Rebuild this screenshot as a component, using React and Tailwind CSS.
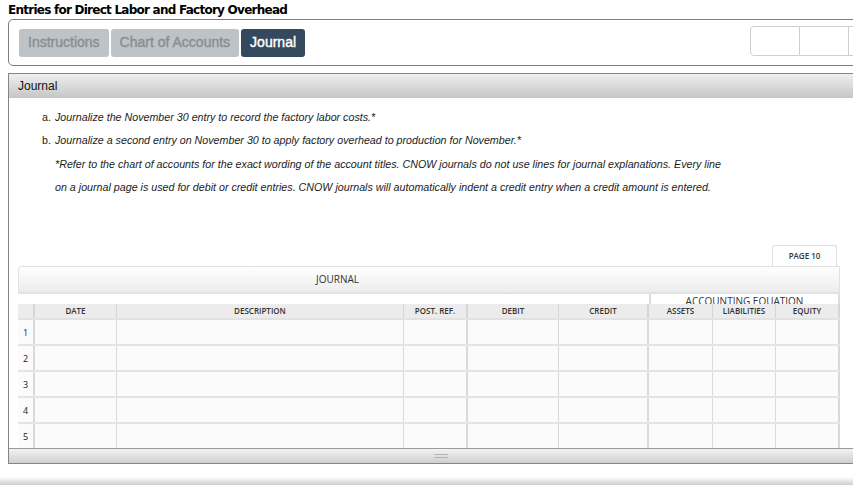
import React from 'react';

const cols = [
  { key: 'num', label: '', w: 'w-[17px] border-r-2' },
  { key: 'date', label: 'DATE', w: 'w-[82px] border-r' },
  { key: 'desc', label: 'DESCRIPTION', w: 'w-[287px] border-r' },
  { key: 'ref', label: 'POST. REF.', w: 'w-[64px] border-r-2' },
  { key: 'debit', label: 'DEBIT', w: 'w-[91px] border-r' },
  { key: 'credit', label: 'CREDIT', w: 'w-[90px] border-r-2' },
  { key: 'assets', label: 'ASSETS', w: 'w-[64px] border-r' },
  { key: 'liab', label: 'LIABILITIES', w: 'w-[63px] border-r' },
  { key: 'equity', label: 'EQUITY', w: 'w-[64px] border-r-2' },
];

const Tab = ({ label, active }) => (
  <div
    className={
      'h-[28px] px-[9px] flex items-center rounded-[3px] text-[14px] [-webkit-text-stroke:0.4px_currentColor] ' +
      (active ? 'bg-[#34495e] text-white' : 'bg-[#bdc3c7] text-[#8a8e91]')
    }
  >
    {label}
  </div>
);

const JournalTable = () => (
  <div className="w-[822px] ml-[9px] font-['Open_Sans',sans-serif]">
    {/* page tab */}
    <div className="flex justify-end pr-[3px]">
      <div className="w-[65px] h-[21px] border border-b-0 border-[#dedede] rounded-t-[3px] bg-white flex items-center justify-center text-[8px] font-semibold text-[#333]">
        PAGE 10
      </div>
    </div>

    {/* title bar */}
    <div className="h-[28px] border border-b-2 border-[#e2e2e2] rounded-tl-[4px] bg-gradient-to-b from-white to-[#ececec] flex items-center text-[10px] text-[#333]">
      <span className="w-[631px] text-center pl-[6px]">JOURNAL</span>
    </div>

    {/* accounting equation strip */}
    <div className="h-[10px] flex bg-white border-r-2 border-[#dcdcdc]">
      <div className="w-[631px]"></div>
      <div className="w-[189px] h-[10px] border-l-2 border-[#dcdcdc] text-center text-[10px] leading-[13px] text-[#333] pt-[1px] whitespace-nowrap">
        ACCOUNTING EQUATION
      </div>
    </div>

    {/* header row */}
    <div className="relative flex h-[16px] bg-[#ececec] border-b-2 border-[#e2e2e2]">
      {cols.map((c) => (
        <div
          key={c.key}
          className={c.w + ' border-[#d6d6d6] flex items-center justify-center text-[8px] font-semibold text-[#333]'}
        >
          {c.label}
        </div>
      ))}
    </div>

    {/* rows */}
    <div className="h-[128px] overflow-hidden">
      {[1, 2, 3, 4, 5].map((n) => (
        <div key={n} className="flex h-[26px] bg-[#fbfbfb] border-b-2 border-[#e4e4e4]">
          {cols.map((c) => (
            <div
              key={c.key}
              className={c.w + ' border-[#dadada] ' + (c.key === 'num' ? 'flex items-center pl-[5px] pt-[2px] text-[9px] text-[#222]' : '')}
            >
              {c.key === 'num' ? n : null}
            </div>
          ))}
        </div>
      ))}
    </div>
  </div>
);

export default function App() {
  return (
    <div className="w-[853px] h-[492px] overflow-hidden bg-white font-['Liberation_Sans',Arial,sans-serif] text-[#222]">
      {/* page title */}
      <div className="h-[19px] pl-[8px] pt-[1px] text-[12px] font-bold text-black font-['DejaVu_Sans',sans-serif] tracking-[-0.75px]">
        Entries for Direct Labor and Factory Overhead
      </div>

      {/* tab box */}
      <div className="ml-[8px] w-[870px] h-[47px] border border-[#7d7d7d] rounded-[5px] flex items-center justify-between pl-[10px]">
        <div className="flex gap-[2px]">
          <Tab label="Instructions" />
          <Tab label="Chart of Accounts" />
          <Tab label="Journal" active />
        </div>
        <div className="flex mr-[8px] -mt-[3px]">
          <div className="w-[50px] h-[30px] border border-[#cfcfcf] rounded-l-[4px] bg-white"></div>
          <div className="w-[49px] h-[30px] border border-l-0 border-[#cfcfcf] bg-white"></div>
          <div className="w-[20px] h-[30px] border border-l-0 border-[#cfcfcf] bg-white"></div>
        </div>
      </div>

      {/* journal panel */}
      <div className="mt-[7px] ml-[8px] w-[870px] border border-[#858585] flex flex-col">
        <div className="h-[24px] bg-gradient-to-b from-[#efefef] to-[#c6c6c6] flex items-center pl-[9px] text-[12px] text-[#111]">
          Journal
        </div>

        <div className="h-[147px] pt-[8px] text-[10.7px] italic text-[#222] leading-[23.3px]">
          <div className="flex">
            <span className="w-[46px] text-right pr-[4px] not-italic">a.</span>
            <span>Journalize the November 30 entry to record the factory labor costs.*</span>
          </div>
          <div className="flex">
            <span className="w-[46px] text-right pr-[4px] not-italic">b.</span>
            <span>Journalize a second entry on November 30 to apply factory overhead to production for November.*</span>
          </div>
          <div className="ml-[46px] w-[672px]">
            *Refer to the chart of accounts for the exact wording of the account titles. CNOW journals do not use lines for journal explanations. Every line on a journal page is used for debit or credit entries. CNOW journals will automatically indent a credit entry when a credit amount is entered.
          </div>
        </div>

        <JournalTable />

        <div className="h-[15px] border-t border-[#9a9a9a] bg-gradient-to-b from-[#f2f2f2] to-[#cfcfcf] flex items-center pl-[425px]">
          <div className="w-[14px] h-[4px] border-y border-[#b4b4b4]"></div>
        </div>
      </div>

      {/* bottom bar */}
      <div className="mt-[13px] h-[8px] bg-gradient-to-b from-white to-[#cdcdcd]"></div>
    </div>
  );
}
